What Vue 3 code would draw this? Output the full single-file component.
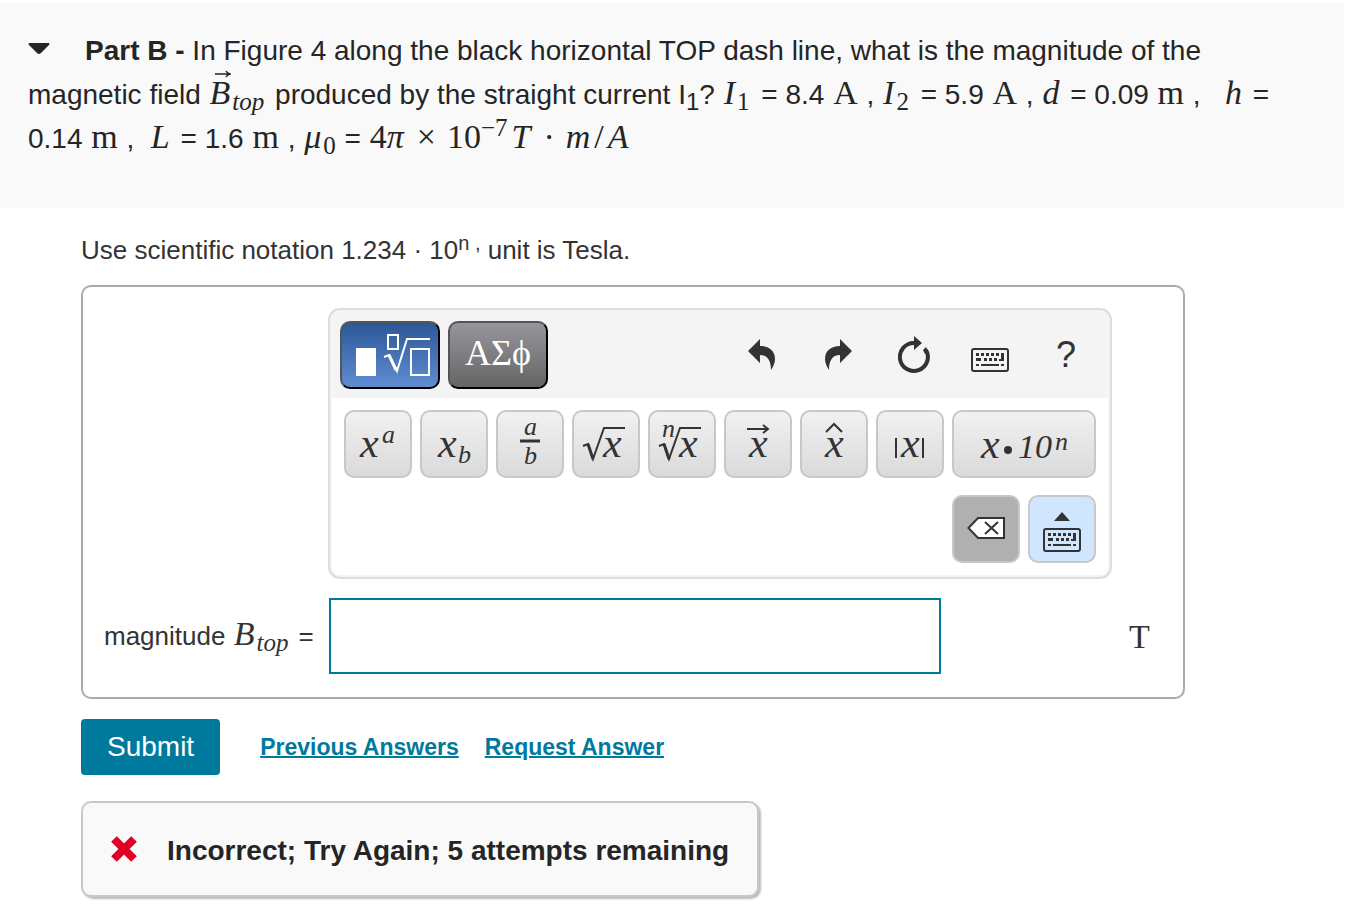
<template>
  <main class="page">
    <header class="prompt">
      <p class="prompt-text">
        <button class="collapse" type="button" aria-label="Collapse Part B">
          <svg width="22" height="12" viewBox="0 0 22 12"><path d="M1 0h20q1 1 0 2l-8 8q-2 2-4 0L1 2q-1-1 0-2z" fill="#252525" /></svg>
        </button>
        <b>Part B - </b>In Figure 4 along the black horizontal TOP dash line, what is the magnitude of the<br>
        magnetic field
        <span class="math"><i class="vector">B<svg class="arrow" width="16" height="8" viewBox="0 0 16 8"><path d="M0 4h14M11 1q1 2 4 3q-3 1-4 3" fill="none" stroke="#252525" stroke-width="1.5" /></svg></i><i class="low">top</i></span>
        produced by the straight current I<span class="low-sans">1</span>?
        <span class="math"><i>I</i><span class="low gap-after">1</span></span>
        = 8.4 <span class="math">A</span> ,
        <span class="math"><i>I</i><span class="low gap-after">2</span></span>
        = 5.9 <span class="math">A</span> , <span class="math"><i>d</i></span> = 0.09
        <span class="math">m</span> , &nbsp; <span class="math"><i>h</i></span> =<br>
        0.14 <span class="math">m</span> , &nbsp;<span class="math"><i>L</i></span> = 1.6
        <span class="math">m</span> ,
        <span class="math"><i>μ</i><span class="low">0</span></span> =
        <span class="math">4<i>π</i><span class="operator">×</span>10<span class="high">−7</span><i>T</i><span class="operator">·</span><i>m</i><span class="slash">/</span><i>A</i></span>
      </p>
    </header>

    <section class="part">
      <p class="instruction">Use scientific notation 1.234 · 10<sup>n ,</sup> unit is Tesla.</p>

      <form class="answer" @submit.prevent>
        <div class="keypad">
          <div class="toolbar">
            <button class="tab active" type="button" aria-label="Templates">
              <svg class="template-icon" width="96" height="64" viewBox="0 0 96 64">
                <path d="M14 25h20v28H14z" fill="#fff" stroke="none" />
                <path d="M46 12h10v14H46zM69 26h18v26H69z" stroke-width="2" />
                <path d="M42 34l5-2 8 16 10-32h23" stroke-width="2" />
                <path d="M47 32l7 15" stroke-width="3" />
              </svg>
            </button>
            <button class="tab" type="button">ΑΣϕ</button>
            <div class="tools">
              <button class="tool" type="button" aria-label="Undo">
                <svg width="28" height="32" viewBox="0 0 28 32"><path d="M0 12L12 0v7c9 0 15 5 15 13 0 4-2 8-4 11 0-9-3-15-11-15v8z" /></svg>
              </button>
              <button class="tool" type="button" aria-label="Redo">
                <svg width="28" height="32" viewBox="0 0 28 32"><path d="M28 12L16 0v7C7 7 1 12 1 20c0 4 2 8 4 11 0-9 3-15 11-15v8z" /></svg>
              </button>
              <button class="tool" type="button" aria-label="Reset">
                <svg width="32" height="38" viewBox="0 0 32 38">
                  <path d="M16 7A14 14 0 1 0 28 14" fill="none" stroke="#333" stroke-width="4" />
                  <path d="M16 0l8 7-8 7zM25 14l3-3 3 6-4 1z" />
                </svg>
              </button>
              <button class="tool keyboard" type="button" aria-label="Keyboard shortcuts">
                <svg width="38" height="24" viewBox="0 0 38 24">
                  <rect class="frame" x="1" y="1" width="36" height="22" rx="2" />
                  <path :d="keys" />
                </svg>
              </button>
              <button class="tool help" type="button" aria-label="Help">?</button>
            </div>
          </div>

          <div class="keys">
            <div class="key-row">
              <button v-for="key in templates" :key="key.name" class="key" :class="{ wide: key.wide }" type="button" :aria-label="key.name">
                <svg :width="key.wide ? 140 : 64" height="64" :viewBox="key.wide ? '0 0 140 64' : '0 0 64 64'">
                  <text v-for="(t, i) in key.texts" :key="i" :x="t.x" :y="t.y" :class="t.size">{{ t.text }}</text>
                  <path v-if="key.line" :d="key.line" class="line" />
                  <path v-if="key.thick" :d="key.thick" class="thick" />
                  <circle v-if="key.dot" cx="54" cy="38" r="4" />
                </svg>
              </button>
            </div>
            <div class="key-row">
              <button class="key erase" type="button" aria-label="Backspace">
                <svg width="38" height="24" viewBox="0 0 38 24">
                  <path d="M1.500 11L11 1h26v20H11z" fill="#fff" stroke="#333" stroke-width="2" />
                  <path d="M18 5l13 12M31 5L18 17" stroke="#333" stroke-width="2" />
                </svg>
              </button>
              <button class="key show" type="button" aria-label="Show keyboard">
                <svg width="16" height="9" viewBox="0 0 16 9"><path d="M0 9l8-9 8 9z" /></svg>
                <svg width="38" height="24" viewBox="0 0 38 24">
                  <rect class="frame" x="1" y="1" width="36" height="22" rx="2" />
                  <path :d="keys" />
                </svg>
              </button>
            </div>
          </div>
        </div>

        <label class="label" for="magnitude">magnitude <span class="math"><i>B</i><i class="low">top</i></span> =</label>
        <input id="magnitude" v-model="answer" class="field" type="text">
        <span class="unit">T</span>
      </form>

      <div class="actions">
        <button class="submit" type="button">Submit</button>
        <a href="#">Previous Answers</a>
        <a href="#">Request Answer</a>
      </div>

      <div class="feedback">
        <svg width="28" height="32" viewBox="0 0 28 32"><path d="M4 4l20 20M24 4L4 24" stroke="#df0024" stroke-width="8" /></svg>
        <strong>Incorrect; Try Again; 5 attempts remaining</strong>
      </div>
    </section>
  </main>
</template>

<script setup>
import { ref } from 'vue'

const answer = ref('')

// small key caps shared by both keyboard icons
const keys = 'M5 5h3v3H5zM10 5h3v3h-3zM15 5h3v3h-3zM20 5h3v3h-3zM25 5h3v3h-3zM30 5h3v8h-5v-2h2zM5 10h5v3H5zM13 10h3v3h-3zM18 10h3v3h-3zM23 10h3v3h-3zM5 16h3v2H5zM10 16h18v2H10zM30 16h3v2h-3z'

const templates = [
  { name: 'Superscript', texts: [{ text: 'x', x: 14, y: 45, size: 'big' }, { text: 'a', x: 36, y: 31, size: 'small' }] },
  { name: 'Subscript', texts: [{ text: 'x', x: 16, y: 45, size: 'big' }, { text: 'b', x: 36, y: 51, size: 'small' }] },
  {
    name: 'Fraction',
    texts: [{ text: 'a', x: 26, y: 23, size: 'small' }, { text: 'b', x: 26, y: 52, size: 'small' }],
    thick: 'M22 29h20'
  },
  {
    name: 'Square root',
    texts: [{ text: 'x', x: 29, y: 45, size: 'big' }],
    line: 'M9 34l5-2 5 15 11-31h21',
    thick: 'M14 32l5 15'
  },
  {
    name: 'Nth root',
    texts: [{ text: 'n', x: 12, y: 25, size: 'small' }, { text: 'x', x: 29, y: 45, size: 'big' }],
    line: 'M9 34l5-2 5 15 11-31h21',
    thick: 'M14 32l5 15'
  },
  { name: 'Vector', texts: [{ text: 'x', x: 23, y: 45, size: 'big' }], line: 'M21 17h21M37 13l5 4-5 4' },
  { name: 'Unit vector', texts: [{ text: 'x', x: 23, y: 45, size: 'big' }], line: 'M24 20l8-8 8 8' },
  { name: 'Absolute value', texts: [{ text: 'x', x: 23, y: 45, size: 'big' }], line: 'M18 26v20M45 26v20' },
  {
    name: 'Scientific notation',
    texts: [{ text: 'x', x: 27, y: 46, size: 'big' }, { text: '10', x: 64, y: 46, size: 'medium' }, { text: 'n', x: 101, y: 38, size: 'small' }],
    dot: true,
    wide: true
  }
]
</script>

<style>
body {
  background: #fff;
}
</style>

<style scoped>
.page {
  padding: 3px 6px 23px 0;
  font-family: "Liberation Sans", Arial, sans-serif;
  font-size: 26px;
  color: #333;
}

button {
  padding: 0;
  font-family: inherit;
  cursor: pointer;
}

svg {
  display: block;
  fill: #333;
}

.prompt {
  padding: 26px 50px 47px 28px;
  background: #f9f9f9;
  color: #252525;
}

.prompt-text {
  margin: 0;
  font-size: 28px;
  line-height: 44px;
}

.collapse {
  display: inline-block;
  margin-right: 35px;
  border: 0;
  background: none;
  vertical-align: 5px;
}

.math,
.unit {
  font-family: "Liberation Serif", "Times New Roman", serif;
  font-size: 34px;
  line-height: 1px;
}

.math {
  padding: 0 1px;
}

.math i {
  margin-right: 2px;
}

.low,
.high {
  font-size: 25px;
  line-height: 1px;
  vertical-align: -6px;
}

.high {
  margin-right: 4px;
  vertical-align: 12px;
}

.low-sans {
  font-size: 24px;
  line-height: 1px;
  vertical-align: -6px;
}

.gap-after {
  margin-right: 3px;
}

.operator {
  margin: 0 11px;
}

.slash {
  margin: 0 4px 0 2px;
}

.vector {
  position: relative;
}

.arrow {
  position: absolute;
  top: -4px;
  left: 5px;
}

.part {
  padding: 20px 159px 0 81px;
}

.instruction {
  margin: 0 0 13px;
  line-height: 44px;
}

.instruction sup {
  font-size: 20px;
  line-height: 1px;
  vertical-align: 9px;
}

.answer {
  display: grid;
  grid-template-columns: 207px minmax(0, 1fr) 54px;
  column-gap: 17px;
  row-gap: 19px;
  align-items: center;
  padding: 21px 0 23px 21px;
  border: 2px solid #aaa;
  border-radius: 10px;
}

.keypad {
  grid-row: 1;
  grid-column: 2;
  padding: 0 2px 2px;
  border: 2px solid #ddd;
  border-radius: 12px;
  background: #f4f4f4;
}

.toolbar {
  display: flex;
  gap: 8px;
  padding: 11px 8px 9px;
}

.tab {
  width: 100px;
  height: 68px;
  padding-bottom: 4px;
  border: 2px outset #555;
  border-radius: 10px;
  background: linear-gradient(#97959d, #656565);
  color: #fff;
  font-family: "Liberation Serif", serif;
  font-size: 36px;
}

.tab.active {
  padding: 0;
  background: linear-gradient(#2c5899, #608dd1);
}

.template-icon {
  fill: none;
  stroke: #fff;
}

.tools {
  display: flex;
  gap: 8px;
  margin-left: auto;
}

.tool {
  display: flex;
  align-items: center;
  justify-content: center;
  width: 68px;
  height: 68px;
  border: 0;
  background: none;
  color: #333;
}

.keyboard {
  padding-top: 10px;
}

.frame {
  fill: none;
  stroke: #333;
  stroke-width: 2;
}

.help {
  font-size: 36px;
}

.keys {
  display: grid;
  gap: 17px;
  padding: 12px;
  border-radius: 0 0 8px 8px;
  background: #fff;
}

.key-row {
  display: flex;
  justify-content: flex-end;
  gap: 8px;
}

.key {
  display: flex;
  flex-direction: column;
  align-items: center;
  justify-content: center;
  width: 68px;
  height: 68px;
  border: 2px solid #c8c8c8;
  border-radius: 10px;
  background: linear-gradient(#f1f1f1, #dadada);
}

.key.wide {
  width: 144px;
}

.key.erase {
  background: #b0b0b0;
}

.key.show {
  gap: 7px;
  padding-top: 6px;
  background: #d0e6ff;
}

.key text {
  font-family: "Liberation Serif", serif;
  font-style: italic;
}

.big {
  font-size: 42px;
}

.medium {
  font-size: 34px;
}

.small {
  font-size: 26px;
}

.line,
.thick {
  fill: none;
  stroke: #333;
  stroke-width: 2;
}

.thick {
  stroke-width: 3;
}

.label {
  grid-row: 2;
  grid-column: 1;
  white-space: nowrap;
}

.field {
  grid-row: 2;
  grid-column: 2;
  box-sizing: border-box;
  width: 78%;
  height: 76px;
  margin-left: 1px;
  padding: 0 12px;
  border: 2px solid #007a9c;
  background: #fff;
  font-family: inherit;
  font-size: 26px;
}

.unit {
  grid-row: 2;
  grid-column: 3;
}

.actions {
  display: flex;
  align-items: center;
  gap: 26px;
  margin: 20px 0 26px;
}

.submit {
  height: 56px;
  margin-right: 14px;
  padding: 0 26px;
  border: 0;
  border-radius: 4px;
  background: #007a9c;
  color: #fff;
  font-size: 28px;
}

.actions a {
  color: #007a9c;
  font-size: 23px;
  font-weight: bold;
  text-decoration-thickness: 2px;
}

.feedback {
  display: flex;
  align-items: center;
  gap: 29px;
  width: fit-content;
  padding: 32px 28px 28px 27px;
  border: 2px solid #c8c8c8;
  border-radius: 10px;
  background: #f9f9f9;
  box-shadow: 2px 2px 2px #bbb;
  color: #252525;
  font-size: 28px;
}
</style>
